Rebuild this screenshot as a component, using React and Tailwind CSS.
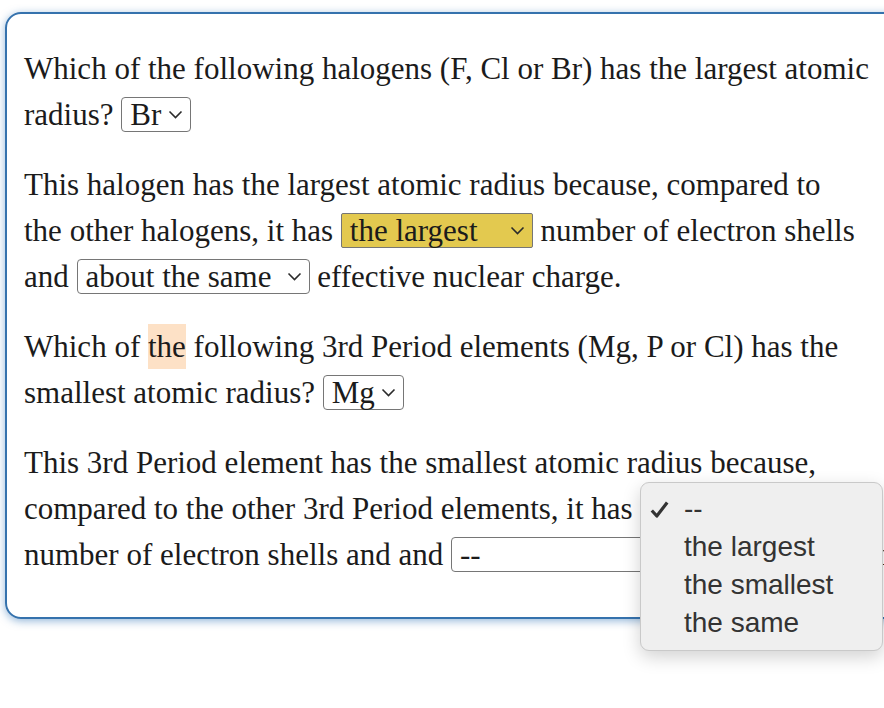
import React from 'react';

const serif = { fontFamily: '"Liberation Serif", "Times New Roman", serif' };

// Closed select, drawn like the native control
function Pick({ value, w, gold }) {
    return (
        <span
            className={`inline-flex items-center justify-between h-[35px] border border-[#767676] pl-[8px] pr-[7px] leading-none ${w} ${gold ? 'bg-[#e3c94f] rounded-[2px]' : 'bg-white rounded-[4px]'}`}
        >
            <span>{value}</span>
            <svg width="15" height="9" viewBox="0 0 15 9" className="shrink-0">
                <polyline points="1.5,1.5 7.5,7.5 13.5,1.5" fill="none" stroke="#2b2b2b" strokeWidth="1.6" />
            </svg>
        </span>
    );
}

// Open dropdown menu of the select in the last question
function OpenMenu() {
    const items = ['--', 'the largest', 'the smallest', 'the same'];
    return (
        <div
            className="absolute left-[640px] top-[482px] w-[243px] h-[169px] bg-[#efefef] border border-[#c9c9c9] rounded-[9px] shadow-[0_6px_18px_rgba(0,0,0,0.18)] pt-[7px] text-[#333] text-[28px]"
            style={{ fontFamily: '"Liberation Sans", Arial, sans-serif' }}
        >
            {items.map((it, i) => (
                <div key={it} className="flex items-center h-[38px]">
                    <span className="w-[43px] flex justify-start pl-[9px]">
                        {i === 0 && (
                            <svg width="19" height="17" viewBox="0 0 19 17">
                                <path d="M1.8 9.5 L6.8 15 L17.2 1.5" fill="none" stroke="#333" strokeWidth="3.2" strokeLinejoin="round" />
                            </svg>
                        )}
                    </span>
                    <span className="leading-none">{it}</span>
                </div>
            ))}
        </div>
    );
}

export default function App() {
    return (
        <div className="relative w-[884px] h-[708px] overflow-hidden bg-white">
            <div
                className="ml-[5px] mt-[12px] w-[915px] border-2 border-[#3572ad] rounded-[16px] shadow-[0_2px_9px_rgba(40,110,180,0.5)] pl-[17px] pr-[40px] pt-[32px] pb-[39px] text-[31px] leading-[46px] text-[#1b1b1b] space-y-[24px]"
                style={serif}
            >
                <p>
                    Which of the following halogens (F, Cl or Br) has the largest atomic radius?{' '}
                    <Pick value="Br" w="w-[70px]" />
                </p>
                <p>
                    This halogen has the largest atomic radius because, compared to the{'\u00A0'}other halogens, it has{' '}
                    <Pick value="the largest" w="w-[192px]" gold /> number of electron shells and{' '}
                    <Pick value="about the same" w="w-[233px]" /> effective nuclear charge.
                </p>
                <p>
                    Which of <span className="inline-block bg-[#fde1c6] leading-[45px]">the</span> following 3rd Period
                    elements (Mg, P or Cl) has the smallest atomic radius? <Pick value="Mg" w="w-[81px]" />
                </p>
                <p>
                    This 3rd Period element has the smallest atomic radius because, compared to the other 3rd Period
                    elements, it has <Pick value="--" w="w-[180px]" />{' '}
                    <span className="whitespace-nowrap">
                        number of electron shells and and <Pick value="--" w="w-[409px]" /> effective nuclear charge.
                    </span>
                </p>
            </div>
            <OpenMenu />
        </div>
    );
}
